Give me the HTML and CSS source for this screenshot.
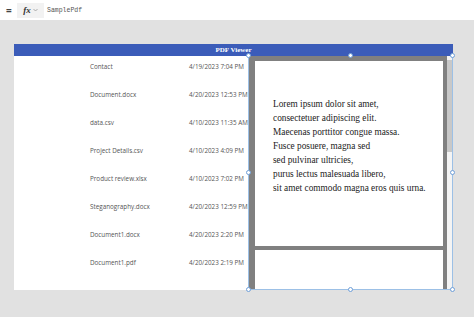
FILE: index.html
```html
<!DOCTYPE html>
<html lang="en">
<head>
    <meta charset="UTF-8">
    <meta name="viewport" content="width=device-width, initial-scale=1.0">
    <title>SamplePdf</title>
    <link rel="stylesheet" href="styles.css">
</head>
<body>
    <div class="formula-bar">
        <span class="equals">=</span>
        <div class="fx-box">
            <span class="fx">fx</span>
            <svg class="chevron" width="5" height="4" viewBox="0 0 5 4"><path d="M0.5 1 L2.5 3 L4.5 1" fill="none" stroke="#999" stroke-width="0.8"/></svg>
        </div>
        <span class="formula">SamplePdf</span>
    </div>

    <div class="stage">
        <div class="screen">
            <div class="header">PDF Viewer</div>
            <div class="content">
                <div class="file-list">
                    <div class="file-row"><span class="file-name">Contact</span><span class="file-date">4/19/2023 7:04 PM</span></div>
                    <div class="file-row"><span class="file-name">Document.docx</span><span class="file-date">4/20/2023 12:53 PM</span></div>
                    <div class="file-row"><span class="file-name">data.csv</span><span class="file-date">4/10/2023 11:35 AM</span></div>
                    <div class="file-row"><span class="file-name">Project Details.csv</span><span class="file-date">4/10/2023 4:09 PM</span></div>
                    <div class="file-row"><span class="file-name">Product review.xlsx</span><span class="file-date">4/10/2023 7:02 PM</span></div>
                    <div class="file-row"><span class="file-name">Steganography.docx</span><span class="file-date">4/20/2023 12:59 PM</span></div>
                    <div class="file-row"><span class="file-name">Document1.docx</span><span class="file-date">4/20/2023 2:20 PM</span></div>
                    <div class="file-row"><span class="file-name">Document1.pdf</span><span class="file-date">4/20/2023 2:19 PM</span></div>
                </div>

                <div class="viewer">
                    <div class="pages">
                        <div class="page">
                            <p>Lorem ipsum dolor sit amet,<br>
                            consectetuer adipiscing elit.<br>
                            Maecenas porttitor congue massa.<br>
                            Fusce posuere, magna sed<br>
                            sed pulvinar ultricies,<br>
                            purus lectus malesuada libero,<br>
                            sit amet commodo magna eros quis urna.</p>
                        </div>
                        <div class="page page-next"></div>
                    </div>
                    <div class="scrollbar">
                        <div class="thumb"></div>
                    </div>

                    <span class="handle h-tl"></span>
                    <span class="handle h-tc"></span>
                    <span class="handle h-tr"></span>
                    <span class="handle h-ml"></span>
                    <span class="handle h-mr"></span>
                    <span class="handle h-bl"></span>
                    <span class="handle h-bc"></span>
                    <span class="handle h-br"></span>
                </div>
            </div>
        </div>
    </div>
</body>
</html>
```

FILE: styles.css
```css
* {
    margin: 0;
    padding: 0;
    box-sizing: border-box;
}

body {
    width: 474px;
    height: 317px;
    overflow: hidden;
    background: #e1e1e1;
    font-family: 'Open Sans', 'Liberation Sans', sans-serif;
}

/* formula bar */

.formula-bar {
    height: 20px;
    background: #ffffff;
    display: flex;
    align-items: center;
    padding-left: 6px;
}

.equals {
    width: 11px;
    font-size: 10px;
    font-weight: 700;
    color: #444;
}

.fx-box {
    width: 27px;
    height: 15px;
    background: #f2f2f2;
    display: flex;
    align-items: center;
    justify-content: center;
    gap: 2px;
    margin-right: 3px;
}

.fx {
    font-family: 'Liberation Serif', serif;
    font-style: italic;
    font-weight: 700;
    font-size: 9px;
    color: #333;
}

.formula {
    font-family: 'Liberation Mono', monospace;
    font-size: 6.5px;
    color: #555;
}

/* app canvas */

.stage {
    padding: 24px 0 0 14px;
}

.screen {
    width: 439px;
    height: 246px;
    background: #ffffff;
    display: flex;
    flex-direction: column;
}

.header {
    height: 12px;
    background: #3b5cb9;
    color: #ffffff;
    font-family: 'Liberation Serif', serif;
    font-weight: 700;
    font-size: 7px;
    line-height: 12px;
    text-align: center;
}

.content {
    flex: 1;
    display: flex;
    min-height: 0;
}

.file-list {
    width: 234px;
    padding: 6px 0 0 76px;
}

.file-row {
    height: 28px;
    display: flex;
    font-size: 6.3px;
    line-height: 10px;
    color: #555;
}

.file-name {
    width: 99px;
}

/* pdf viewer */

.viewer {
    position: relative;
    flex: 1;
    display: flex;
    background: #808080;
    border: 1px solid #9cc0e6;
    border-top: none;
}

.pages {
    flex: 1;
    padding: 5px 4px 0 6px;
    overflow: hidden;
}

.page {
    background: #ffffff;
    height: 185px;
    padding: 36px 0 0 18px;
}

.page p {
    font-family: 'Liberation Serif', serif;
    font-size: 9.3px;
    line-height: 14px;
    color: #222;
}

.page-next {
    margin-top: 4px;
    height: 60px;
    padding: 0;
}

.scrollbar {
    width: 5px;
    background: #f4f4f4;
    padding-top: 4px;
}

.thumb {
    height: 92px;
    background: #c8c8c8;
}

.handle {
    position: absolute;
    width: 5px;
    height: 5px;
    border-radius: 50%;
    background: #ffffff;
    border: 1px solid #6f9fd8;
}

.h-tl { left: -3px; top: -3px; }
.h-tc { left: 99px; top: -3px; }
.h-tr { right: -3px; top: -3px; }
.h-ml { left: -3px; top: 114px; }
.h-mr { right: -3px; top: 114px; }
.h-bl { left: -3px; bottom: -3px; }
.h-bc { left: 99px; bottom: -3px; }
.h-br { right: -3px; bottom: -3px; }
```
